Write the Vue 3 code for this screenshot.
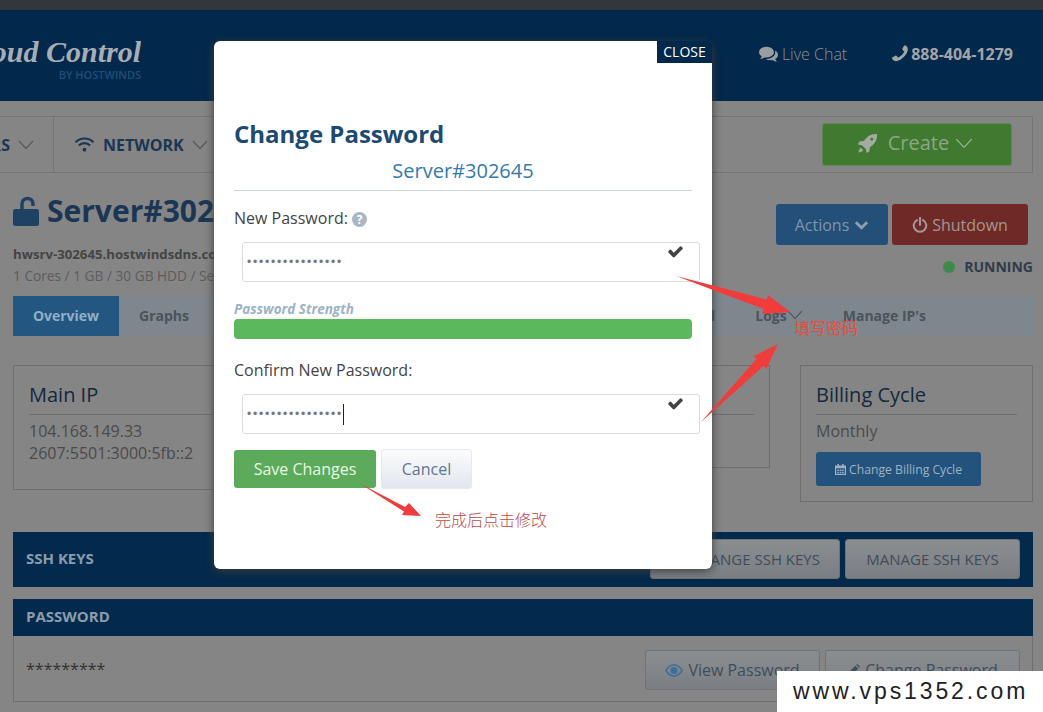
<template>
  <div class="page">
    <div class="topbar"></div>
    <header class="header">
      <div class="logo">
        <div class="logo-name">Cloud Control</div>
        <div class="logo-by">BY HOSTWINDS</div>
      </div>
      <div class="contact">
        <span class="chat">
          <svg class="ico-chat" viewBox="0 0 1792 1792"><path d="M1408 768q0 139-94 257t-256.500 186.500-353.500 68.500q-86 0-176-16-124 88-278 128-36 9-86 16h-3q-11 0-20.500-8t-11.500-21q-1-3-1-6.500t.5-6.500 2-6l2.500-5 3.500-5.500 4-5 4.500-5 4-4.500q5-6 23-25t26-29.500 22.500-29 25-38.500 20.500-44q-124-72-195-177t-71-224q0-139 94-257t256.500-186.500 353.500-68.500 353.500 68.500 256.500 186.500 94 257zm384 256q0 120-71 224.500t-195 176.500q10 24 20.500 44t25 38.500 22.500 29 26 29.500 23 25q1 1 4 4.500t4.500 5 4 5 3.500 5.500l2.500 5 2 6 .5 6.500-1 6.500q-3 14-13 22t-22 7q-50-7-86-16-154-40-278-128-90 16-176 16-271 0-472-132 58 4 88 4 161 0 309-45t264-129q125-92 192-212t67-254q0-77-23-152 129 71 204 178t75 230z"/></svg>
          Live Chat
        </span>
        <span class="phone">
          <svg class="ico-phone" viewBox="0 0 1792 1792"><path d="M1600 1240q0 27-10 70.500t-21 68.500q-21 50-122 106-94 51-186 51-27 0-53-3.500t-57.500-12.500-47-14.500-55.500-20.500-49-18q-98-35-175-83-127-79-264-216t-216-264q-48-77-83-175-3-9-18-49t-20.500-55.500-14.500-47-12.500-57.500-3.500-53q0-92 51-186 56-101 106-122 25-11 68.500-21t70.500-10q14 0 21 3 18 6 53 76 11 19 30 54t35 63.500 31 53.500q3 4 17.500 25t21.500 35.500 7 28.500q0 20-28.500 50t-62 55-62 53-28.500 46q0 9 5 22.500t8.500 20.500 14 24 11.500 19q76 137 174 235t235 174q2 1 19 11.500t24 14 20.500 8.500 22.500 5q18 0 46-28.500t53-62 55-62 50-28.500q14 0 28.500 7t35.500 21.500 25 17.500q25 15 53.500 31t63.500 35 54 30q70 35 76 53 3 7 3 21z" transform="matrix(-1 0 0 1 1792 0)"/></svg>
          888-404-1279
        </span>
      </div>
    </header>

    <nav class="nav">
      <div class="nav-item nav-first">
        SERVERS
        <svg class="chev" viewBox="0 0 16 10"><polyline points="1,1 8,8.500 15,1" /></svg>
      </div>
      <div class="nav-item nav-net">
        <svg class="ico-wifi" viewBox="0 0 22 18">
          <path d="M1.500 6.500a13.500 13.500 0 0 1 19 0M5 10a8.500 8.500 0 0 1 12 0" />
          <circle cx="11" cy="14.500" r="2" />
        </svg>
        NETWORK
        <svg class="chev" viewBox="0 0 16 10"><polyline points="1,1 8,8.500 15,1" /></svg>
      </div>
      <button class="create">
        <svg class="ico-rocket" viewBox="0 0 22 22">
          <path d="M21 1c-5-.5-9 1.500-12 5l-2 2.500-4.500.5L1 12l4.200.8 4 4L10 21l3-1.500.5-4.500 2.500-2c3.500-3 5.500-7 5-12zM15.500 5a1.500 1.500 0 1 1 0 3 1.500 1.500 0 0 1 0-3zM4 15.500c-1.500 1-2 3-2.500 5 2-.5 4-1 5-2.500z" />
        </svg>
        Create
        <svg class="chev chev-create" viewBox="0 0 16 10"><polyline points="1,1 8,8.500 15,1" /></svg>
      </button>
    </nav>

    <section class="title-row">
      <div class="title-left">
        <h1>
          <svg class="ico-lock" viewBox="0 0 26 30">
            <path class="shackle" d="M9 15V8a5.500 5.500 0 0 1 11 0v2" />
            <rect x="0" y="13" width="26" height="17" rx="2.500" />
          </svg>
          Server#302645
        </h1>
        <div class="host">hwsrv-302645.hostwindsdns.com</div>
        <div class="specs">1 Cores / 1 GB / 30 GB HDD / Seattle</div>
      </div>
      <div class="title-right">
        <div class="actions">
          <button class="btn-actions">
            Actions
            <svg class="chev-bold" viewBox="0 0 16 10"><polyline points="2,2 8,8 14,2" /></svg>
          </button>
          <button class="btn-shutdown">
            <svg class="ico-power" viewBox="0 0 18 18">
              <path d="M5.500 3.500a7 7 0 1 0 7 0M9 1v8" />
            </svg>
            Shutdown
          </button>
        </div>
        <div class="status"><i class="dot"></i>RUNNING</div>
      </div>
    </section>

    <div class="tabs">
      <div class="tab active">Overview</div>
      <div class="tab graphs">Graphs</div>
      <div class="tabs-right">
        <span>Reinstall</span>
        <span class="logs">Logs <svg class="chev chev-logs" viewBox="0 0 16 10"><polyline points="1,1 8,8.500 15,1" /></svg></span>
        <span>Manage IP's</span>
      </div>
    </div>

    <div class="cards">
      <div class="card card-main">
        <h3>Main IP</h3>
        <div>104.168.149.33</div>
        <div>2607:5501:3000:5fb::2</div>
      </div>
      <div class="card card-mid">
        <h3>Location</h3>
        <div>Seattle</div>
      </div>
      <div class="card card-bill">
        <h3>Billing Cycle</h3>
        <div>Monthly</div>
        <button class="btn-bill">
          <svg class="ico-cal" viewBox="0 0 14 14">
            <path d="M3 0h2v2h4V0h2v2h3v12H0V2h3zM1.500 5.500v7h11v-7zM3 7h2v2H3zm3 0h2v2H6zm3 0h2v2H9zM3 10h2v1.500H3zm3 0h2v1.500H6zm3 0h2v1.500H9z" fill-rule="evenodd" />
          </svg>
          Change Billing Cycle
        </button>
      </div>
    </div>

    <div class="panel-head ssh">
      <span>SSH KEYS</span>
      <div class="ssh-btns">
        <button class="btn-light b-change">CHANGE SSH KEYS</button>
        <button class="btn-light b-manage">MANAGE SSH KEYS</button>
      </div>
    </div>
    <div class="panel-head pw"><span>PASSWORD</span></div>
    <div class="panel-body">
      <span class="stars">*********</span>
      <div class="pw-btns">
        <button class="btn-light b-view">
          <svg class="ico-eye" viewBox="0 0 20 14">
            <path d="M10 0C5.500 0 2 3 0 7c2 4 5.500 7 10 7s8-3 10-7c-2-4-5.500-7-10-7zm0 1.800C13 1.800 16.200 4 18 7c-1.800 3-5 5.200-8 5.200S3.800 10 2 7c1.800-3 5-5.200 8-5.200zM10 3a4 4 0 1 0 0 8 4 4 0 0 0 0-8z" fill-rule="evenodd" />
          </svg>
          View Password
        </button>
        <button class="btn-light b-edit">
          <svg class="ico-pencil" viewBox="0 0 14 14"><path d="M0 14l1-4 8-8 3 3-8 8zM10 1l1-1 3 3-1 1z" /></svg>
          Change Password
        </button>
      </div>
    </div>

    <div class="dialog">
      <a class="close">CLOSE</a>
      <h2>Change Password</h2>
      <div class="dialog-sub">Server#302645</div>
      <label class="lbl first">New Password:
        <span class="help">?</span>
      </label>
      <div class="field">
        <span class="dots">{{ masked }}</span>
        <svg class="ok" viewBox="0 0 1792 1792"><path d="M1671 566q0 40-28 68l-724 724-136 136q-28 28-68 28t-68-28l-136-136-362-362q-28-28-28-68t28-68l136-136q28-28 68-28t68 28l294 295 656-657q28-28 68-28t68 28l136 136q28 28 28 68z"/></svg>
      </div>
      <div class="strength">Password Strength</div>
      <div class="bar"></div>
      <label class="lbl second">Confirm New Password:</label>
      <div class="field">
        <span class="dots">{{ masked }}</span><i class="caret"></i>
        <svg class="ok" viewBox="0 0 1792 1792"><path d="M1671 566q0 40-28 68l-724 724-136 136q-28 28-68 28t-68-28l-136-136-362-362q-28-28-28-68t28-68l136-136q28-28 68-28t68 28l294 295 656-657q28-28 68-28t68 28l136 136q28 28 28 68z"/></svg>
      </div>
      <div class="dialog-btns">
        <button class="btn-save">Save Changes</button>
        <button class="btn-cancel">Cancel</button>
      </div>
    </div>

    <svg class="arrows" viewBox="0 0 1043 712">
      <polygon points="676,276 766.700,299.400 768,295 790,312 762,314 763.700,309" />
      <polygon points="701,422 756.500,359 753.600,356.200 778,344 766.400,368.800 763.500,366" />
      <polygon points="359,483 405,507 409,503 421,516 402,515 404,511.500" />
    </svg>
    <span class="note note-fill">填写密码</span>
    <span class="note note-done">完成后点击修改</span>

    <div class="watermark">www.vps1352.com</div>
  </div>
</template>

<script setup>
const masked = '•'.repeat(16)
</script>

<style>
html, body {
  margin: 0;
  overflow: hidden;
}
</style>

<style scoped>
.page {
  position: relative;
  height: 712px;
  overflow: hidden;
  background: #858585;
  font-family: "Open Sans", "Noto Sans", sans-serif;
  color: #444;
}

button {
  font-family: inherit;
  cursor: pointer;
}

.topbar {
  height: 10px;
  background: #33373c;
}

.header {
  height: 91px;
  background: #02284b;
  display: flex;
  justify-content: space-between;
  color: #8f9296;
}

.logo {
  width: 141px;
  display: flex;
  flex-direction: column;
  align-items: flex-end;
  overflow: hidden;
}

.logo-name {
  margin-top: 24px;
  font-family: "Liberation Serif", serif;
  font-style: italic;
  font-weight: 700;
  font-size: 30px;
  line-height: 36px;
  white-space: nowrap;
  color: #a6adb4;
}

.logo-by {
  color: #1f4f7a;
  font-size: 11px;
  font-weight: 600;
  line-height: 14px;
  margin-top: -2px;
  white-space: nowrap;
}

.contact {
  display: flex;
  align-items: center;
  padding-right: 30px;
  padding-bottom: 4px;
  font-size: 16px;
}

.chat {
  font-weight: 300;
  display: flex;
  align-items: center;
  gap: 4px;
  margin-right: 43px;
}

.ico-chat {
  width: 19px;
  height: 19px;
  fill: #9a9da1;
}

.phone {
  font-weight: 700;
  display: flex;
  align-items: center;
  gap: 1px;
  color: #a2a5a8;
}

.ico-phone {
  width: 20px;
  height: 20px;
  fill: #a2a5a8;
}

.nav {
  position: relative;
  height: 55px;
  margin: 15px 10px 0 0;
  border: 1px solid #747474;
  border-left: 0;
  display: flex;
  align-items: center;
  color: #1a3654;
  font-weight: 700;
  font-size: 16px;
}

.nav-item {
  height: 100%;
  display: flex;
  align-items: center;
  white-space: nowrap;
}

.nav-first {
  width: 54px;
  box-sizing: border-box;
  justify-content: flex-end;
  padding-right: 19px;
  border-right: 1px solid #747474;
  overflow: hidden;
  flex-shrink: 0;
}

.nav-net {
  padding-left: 20px;
}

.chev {
  width: 16px;
  height: 10px;
  margin-left: 8px;
  fill: none;
  stroke: #5a5a5a;
  stroke-width: 1.2;
  flex-shrink: 0;
}

.ico-wifi {
  width: 21px;
  height: 17px;
  margin-right: 8px;
  fill: #1a3654;
  stroke: #1a3654;
}

.ico-wifi path {
  fill: none;
  stroke-width: 2.200;
}

.ico-wifi circle {
  stroke: none;
}

.create {
  margin-left: auto;
  margin-right: 20px;
  margin-top: -1px;
  width: 190px;
  height: 43px;
  background: #3f7a30;
  border: 1px solid #5d8a50;
  border-radius: 3px;
  color: #8ea686;
  font-size: 20px;
  line-height: 24px;
  display: flex;
  align-items: center;
  justify-content: center;
  padding: 0 4px 2px 0;
}

.ico-rocket {
  width: 21px;
  height: 21px;
  fill: #a4aba0;
  margin-right: 10px;
}

.chev-create {
  width: 18px;
  height: 11px;
  stroke: #a0b09a;
  margin-left: 6px;
}

.title-row {
  display: flex;
  justify-content: space-between;
  padding: 18px 10px 0 13px;
  height: 105px;
}

.title-left h1 {
  margin: 0;
  font-size: 30px;
  line-height: 40px;
  color: #1a3654;
  display: flex;
  align-items: center;
  gap: 8px;
  white-space: nowrap;
}

.ico-lock {
  width: 26px;
  height: 30px;
  fill: #1f4264;
}

.shackle {
  fill: none;
  stroke: #1f4264;
  stroke-width: 3.500;
}

.host {
  margin-top: 14px;
  font-size: 13.200px;
  font-weight: 700;
  line-height: 18px;
  color: #444;
  white-space: nowrap;
}

.specs {
  font-size: 13.700px;
  line-height: 18px;
  margin-top: 4px;
  color: #5c5c5c;
  white-space: nowrap;
}

.title-right {
  display: flex;
  flex-direction: column;
  align-items: flex-end;
}

.actions {
  display: flex;
  gap: 4px;
  margin-right: 5px;
  margin-top: 13px;
}

.actions button {
  height: 41px;
  border: 0;
  border-radius: 3px;
  font-size: 16px;
  display: flex;
  align-items: center;
  justify-content: center;
  padding: 0;
}

.btn-actions {
  width: 112px;
  background: #234f78;
  color: #7e96aa;
}

.btn-shutdown {
  width: 136px;
  background: #6f2a27;
  color: #a39694;
}

.chev-bold {
  width: 15px;
  height: 10px;
  margin-left: 5px;
  fill: none;
  stroke: #8ba0b2;
  stroke-width: 3;
}

.ico-power {
  width: 16px;
  height: 16px;
  margin-right: 4px;
  fill: none;
  stroke: #a39694;
  stroke-width: 2.400;
  stroke-linecap: round;
}

.status {
  margin-top: 12px;
  font-size: 14px;
  font-weight: 700;
  line-height: 20px;
  color: #2f3b4a;
  display: flex;
  align-items: center;
  gap: 9px;
}

.dot {
  width: 12px;
  height: 12px;
  border-radius: 50%;
  background: #3f8a4a;
}

.tabs {
  height: 40px;
  box-sizing: border-box;
  padding-bottom: 0;
  margin: 0 10px 0 13px;
  background: #7e878d;
  display: flex;
  align-items: center;
  font-size: 14px;
  font-weight: 700;
  color: #4b535b;
}

.tab {
  height: 100%;
  display: flex;
  align-items: center;
  padding-bottom: 2px;
  box-sizing: border-box;
}

.tab.active {
  width: 106px;
  justify-content: center;
  background: #235680;
  color: #8fb0c8;
}

.graphs {
  margin-left: 20px;
}

.tabs-right {
  margin-left: auto;
  margin-right: 107px;
  margin-bottom: 2px;
  display: flex;
  align-items: center;
  gap: 40px;
}

.logs {
  display: flex;
  align-items: center;
  gap: 0;
}

.chev-logs {
  margin-left: 0;
}

.cards {
  display: flex;
  align-items: flex-start;
  gap: 30px;
  margin: 29px 10px 0 13px;
  font-size: 16px;
  line-height: 22px;
  color: #4a4a4a;
}

.card {
  box-sizing: border-box;
  border: 1px solid #6e6e6e;
  padding: 14px 15px;
}

.card h3 {
  margin: 0 0 5px;
  padding-bottom: 5px;
  border-bottom: 1px solid #6e6e6e;
  font-size: 20px;
  font-weight: 400;
  line-height: 29px;
  color: #14283e;
}

.card-main {
  width: 370px;
  height: 125px;
}

.card-mid {
  width: 357px;
  height: 103px;
}

.card-bill {
  width: 233px;
  height: 137px;
}

.btn-bill {
  display: flex;
  align-items: center;
  justify-content: center;
  width: 165px;
  height: 34px;
  margin-top: 10px;
  padding: 0;
  background: #23527c;
  border: 0;
  border-radius: 3px;
  color: #9fb2c2;
  font-size: 12.200px;
}

.ico-cal {
  width: 11px;
  height: 11px;
  fill: #9fb2c2;
  margin-right: 3px;
}

.panel-head {
  margin: 0 10px 0 13px;
  background: #032a4c;
  display: flex;
  align-items: center;
  justify-content: space-between;
  padding-left: 13px;
  font-size: 15px;
  font-weight: 700;
  color: #8a9cad;
}

.panel-head span {
  margin-bottom: 4px;
}

.ssh {
  position: absolute;
  top: 532px;
  left: 0;
  right: 0;
  height: 55px;
}

.pw {
  position: absolute;
  top: 599px;
  left: 0;
  right: 0;
  height: 37px;
}

.ssh-btns, .pw-btns {
  display: flex;
  gap: 5px;
}

.ssh-btns {
  padding-right: 13px;
  margin-top: -1px;
}

.btn-light {
  height: 40px;
  padding: 0;
  border: 1px solid #6f7276;
  border-radius: 3px;
  background: linear-gradient(#8b8e91, #7a7e83);
  color: #3f4c5a;
  font-size: 15px;
  display: flex;
  align-items: center;
  justify-content: center;
}

.b-change {
  width: 190px;
  padding-left: 20px;
}

.b-manage {
  width: 175px;
}

.b-view {
  width: 175px;
  font-size: 16px;
}

.b-edit {
  width: 195px;
  font-size: 16px;
}

.panel-body {
  position: absolute;
  top: 636px;
  left: 13px;
  right: 10px;
  height: 66px;
  box-sizing: border-box;
  border: 1px solid #6e6e6e;
  border-top: 0;
  display: flex;
  align-items: center;
  justify-content: space-between;
  padding: 0 12px 0 12px;
}

.pw-btns {
  margin-top: 3px;
}

.stars {
  font-size: 16px;
  color: #333;
}

.ico-eye {
  width: 18px;
  height: 13px;
  fill: #3d6f9c;
  margin-right: 5px;
}

.ico-pencil {
  width: 13px;
  height: 13px;
  fill: #3f4c5a;
  margin-right: 5px;
}

.dialog {
  position: absolute;
  left: 214px;
  top: 41px;
  width: 498px;
  height: 528px;
  box-sizing: border-box;
  padding: 76px 20px 0;
  background: #fff;
  border-radius: 6px;
  box-shadow: 0 2px 10px #3c3c3c;
}

.close {
  position: absolute;
  right: 0;
  top: 0;
  width: 55px;
  height: 22px;
  background: #02284b;
  color: #fff;
  font-size: 14px;
  line-height: 22px;
  text-align: center;
}

.dialog h2 {
  margin: 0;
  font-size: 24px;
  font-weight: 700;
  line-height: 34px;
  color: #1b4a75;
}

.dialog-sub {
  margin-top: 5px;
  padding-bottom: 5px;
  border-bottom: 1px solid #c7d6e2;
  text-align: center;
  font-size: 20px;
  line-height: 29px;
  color: #337ab7;
}

.lbl {
  display: block;
  font-size: 16px;
  line-height: 22px;
  color: #444;
}

.lbl.first {
  margin-top: 16px;
}

.lbl.second {
  margin-top: 20px;
}

.help {
  display: inline-block;
  width: 15px;
  height: 15px;
  border-radius: 50%;
  background: #a9b6c3;
  color: #fff;
  font-size: 12px;
  font-weight: 700;
  line-height: 15px;
  text-align: center;
  vertical-align: 0;
}

.field {
  position: relative;
  box-sizing: border-box;
  width: 458px;
  height: 40px;
  margin: 13px 0 0 8px;
  padding-left: 4px;
  border: 1px solid #d9dde2;
  border-radius: 3px;
  display: flex;
  align-items: center;
  font-family: "Liberation Sans", sans-serif;
  font-size: 12px;
  color: #777;
}

.dots {
  letter-spacing: 1.800px;
  line-height: 38px;
}

.caret {
  width: 1px;
  height: 21px;
  background: #222;
}

.ok {
  position: absolute;
  right: 15px;
  top: 0;
  width: 17px;
  height: 17px;
  fill: #444;
}

.strength {
  margin-top: 18px;
  font-size: 13.500px;
  font-weight: 700;
  font-style: italic;
  line-height: 18px;
  color: #9db3c5;
}

.bar {
  height: 20px;
  margin-top: 1px;
  background: #5cb85c;
  border-radius: 4px;
}

.dialog-btns {
  display: flex;
  gap: 5px;
  margin-top: 16px;
}

.btn-save {
  width: 142px;
  height: 38px;
  padding: 0;
  background: #5cab5a;
  border: 0;
  border-radius: 3px;
  color: #e9f7e4;
  font-size: 16px;
}

.btn-cancel {
  width: 91px;
  height: 40px;
  margin-top: -1px;
  padding: 0;
  background: linear-gradient(#fbfcfd, #e2e6ed);
  border: 1px solid #e6e9ee;
  border-radius: 3px;
  color: #5f7594;
  font-size: 16px;
}

.arrows {
  position: absolute;
  inset: 0;
  width: 1043px;
  height: 712px;
  fill: #f23b3b;
  pointer-events: none;
}

.note {
  position: absolute;
  font-family: "Noto Sans CJK SC", sans-serif;
  font-size: 16px;
  line-height: 20px;
  white-space: nowrap;
}

.note-fill {
  left: 794px;
  top: 317px;
  color: #ee4a3c;
}

.note-done {
  left: 435px;
  top: 509px;
  color: #c0473f;
  font-weight: 300;
}

.watermark {
  position: absolute;
  right: 0;
  bottom: 0;
  width: 266px;
  height: 41px;
  box-sizing: border-box;
  padding-left: 16px;
  background: #fff;
  font-family: "Liberation Sans", sans-serif;
  font-size: 23px;
  letter-spacing: 2.900px;
  line-height: 41px;
  color: #222;
  white-space: nowrap;
}
</style>
